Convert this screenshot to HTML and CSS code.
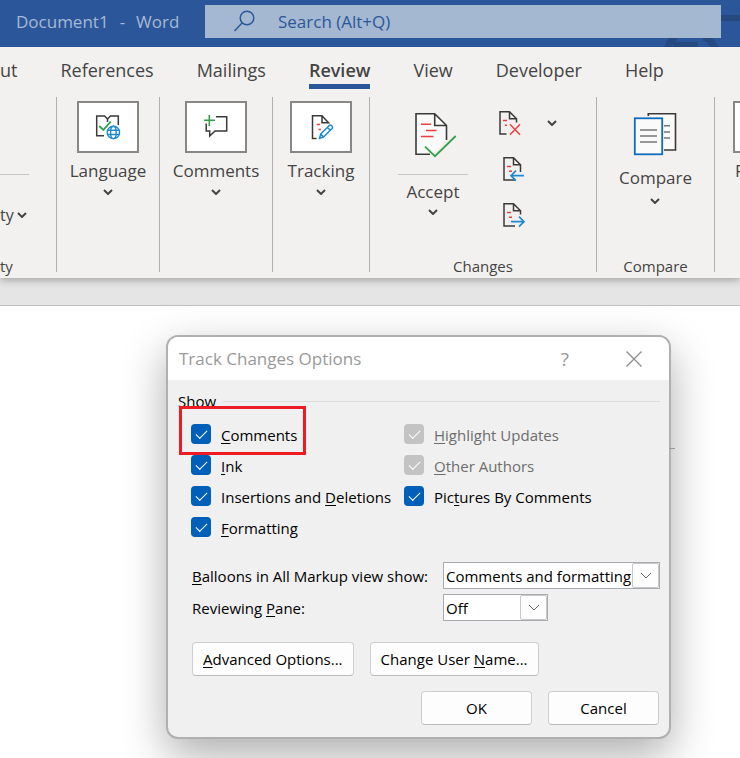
FILE: index.html
```
<!DOCTYPE html>
<html lang="en">

<head>
  <meta charset="UTF-8">
  <title>Document1 - Word</title>
  <link rel="stylesheet" href="styles.css">
</head>

<body>
  <header class="title-bar">
    <div class="doc-name"><span>Document1</span><span>-</span><span>Word</span></div>
    <div class="search">
      <svg width="22" height="24" viewBox="0 0 22 24" fill="none" stroke="#2b579a" stroke-width="1.5">
        <circle cx="13" cy="8" r="6.8" />
        <path d="M8 13L0.5 21" />
      </svg>
      <input type="text" placeholder="Search (Alt+Q)" aria-label="Search">
    </div>
    <svg class="decor" width="76" height="47" viewBox="0 0 76 47" fill="none" stroke="#264a80">
      <path d="M50 18H76" stroke-width="6" />
      <path d="M3 50Q5 40 12 37M40 37Q48 40 52 50" stroke-width="7" />
      <path d="M9 45H34" stroke-width="6" />
    </svg>
  </header>

  <nav class="tabs">
    <a href="#">ut</a>
    <a href="#">References</a>
    <a href="#">Mailings</a>
    <a href="#" class="active">Review</a>
    <a href="#">View</a>
    <a href="#">Developer</a>
    <a href="#">Help</a>
  </nav>

  <div class="ribbon">
    <section class="group accessibility">
      <button class="menu-btn">ty <svg class="chevron" width="10" height="6" viewBox="0 0 10 6"><path d="M1 1l4 4 4-4" /></svg></button>
      <span class="group-name">ty</span>
    </section>

    <section class="group language">
      <button class="big-btn">
        <span class="icon-box">
          <svg width="26" height="26" viewBox="0 0 26 26" fill="none" stroke="#3b3a39" stroke-width="1.5">
            <path d="M9 21.7H1.7V2H9.5L12.5 5L15.5 2H23.3V11" />
            <path d="M12.5 5V8" />
            <path d="M4.3 12L8.3 16L15.7 7.7" stroke="#33a04f" stroke-width="1.8" />
            <g stroke="#1e8bd1" stroke-width="1.4">
              <circle cx="18.4" cy="18.4" r="6.2" />
              <ellipse cx="18.4" cy="18.4" rx="2.8" ry="6.2" />
              <path d="M12.5 16.3H24.3M12.5 20.5H24.3" />
            </g>
          </svg>
        </span>
        Language
        <svg class="chevron" width="10" height="6" viewBox="0 0 10 6"><path d="M1 1l4 4 4-4" /></svg>
      </button>
    </section>

    <section class="group comments">
      <button class="big-btn">
        <span class="icon-box">
          <svg width="26" height="26" viewBox="0 0 26 26" fill="none" stroke="#3b3a39" stroke-width="1.5">
            <path d="M13 2.7H23.7V17H12L6.7 22V17H3.2V9.5" />
            <path d="M6.3 1V12M1 6.3H12" stroke="#33a04f" stroke-width="1.6" />
          </svg>
        </span>
        Comments
        <svg class="chevron" width="10" height="6" viewBox="0 0 10 6"><path d="M1 1l4 4 4-4" /></svg>
      </button>
    </section>

    <section class="group tracking">
      <button class="big-btn">
        <span class="icon-box">
          <svg width="26" height="26" viewBox="0 0 26 26" fill="none" stroke="#3b3a39" stroke-width="1.5">
            <path d="M8.5 24.5H4.5V1.8H14L20.5 8.8H14V1.8" />
            <path d="M8.7 10.5H12M10.5 15.5H13" stroke="#f03e3e" />
            <path d="M11.5 24.3L12.8 20L21.3 11.5Q22.5 10.4 23.8 11.7T24 14.5L15.5 23ZM19.5 13.5L22 16M12.8 20L15.5 23" stroke="#1e8bd1" />
          </svg>
        </span>
        Tracking
        <svg class="chevron" width="10" height="6" viewBox="0 0 10 6"><path d="M1 1l4 4 4-4" /></svg>
      </button>
    </section>

    <section class="group changes">
      <div class="changes-body">
        <button class="big-btn accept">
          <svg width="48" height="46" viewBox="-4 0 48 46" fill="none" stroke="#3b3a39" stroke-width="1.6">
            <path d="M17 42.3H3V1.7H21.7L33.5 13.5V28L22 40Z" fill="#fafafa" stroke="none" />
            <path d="M17 42.3H3V1.7H21.7L33.5 13.5V28M21.7 1.7V13.5H33.5" />
            <path d="M8 12.3H18M13 18.5H23.5M8 24.5H20.5" stroke="#f03e3e" />
            <path d="M12 34.7L22 44.2L42.7 24" stroke="#33a04f" stroke-width="1.8" />
          </svg>
          <span class="accept-name">Accept</span>
          <svg class="chevron" width="10" height="6" viewBox="0 0 10 6"><path d="M1 1l4 4 4-4" /></svg>
        </button>
        <div class="small-btns">
          <button class="reject" aria-label="Reject">
            <svg width="24" height="26" viewBox="0 0 24 26" fill="none" stroke="#3b3a39" stroke-width="1.5">
              <path d="M8.5 24H2V1.8H11.5L18.5 8.8V12.5M11.5 1.8V8.8H18.5" />
              <path d="M5 10.5H9M7 15.2H9" stroke="#f03e3e" />
              <path d="M12 14.3L22 24.7M22 14.3L12 24.7" stroke="#f03e3e" />
            </svg>
            <svg class="chevron" width="10" height="6" viewBox="0 0 10 6"><path d="M1 1l4 4 4-4" /></svg>
          </button>
          <button aria-label="Previous">
            <svg width="24" height="26" viewBox="0 0 24 26" fill="none" stroke="#3b3a39" stroke-width="1.5">
              <path d="M13 24H2V1.8H11.5L18.5 8.8V16M11.5 1.8V8.8H18.5" />
              <path d="M5 10.5H9M7 15.2H10" stroke="#f03e3e" />
              <path d="M22 19.7H9M14 14.7L9 19.7L14 24.7" stroke="#1e8bd1" stroke-width="1.7" />
            </svg>
          </button>
          <button aria-label="Next">
            <svg width="24" height="26" viewBox="0 0 24 26" fill="none" stroke="#3b3a39" stroke-width="1.5">
              <path d="M13 24H2V1.8H11.5L18.5 8.8V12.5M11.5 1.8V8.8H18.5" />
              <path d="M5 10.5H9M7 15.2H10" stroke="#f03e3e" />
              <path d="M9 19.7H22M17 14.7L22 19.7L17 24.7" stroke="#1e8bd1" stroke-width="1.7" />
            </svg>
          </button>
        </div>
      </div>
      <span class="group-name">Changes</span>
    </section>

    <section class="group compare">
      <button class="big-btn compare-btn">
        <svg width="44" height="44" viewBox="0 0 44 44" fill="none" stroke="#3b3a39" stroke-width="1.6">
          <path d="M15.3 4V1.8H42.5V38H31" fill="#fafafa" />
          <rect x="1.8" y="6.3" width="27.4" height="36" fill="#fafafa" stroke="#0f6cbd" stroke-width="1.8" />
          <path d="M7 18H24M7 24H24M7 30H24M31 13.7H37M31 20H37M31 26H37" stroke="#777" />
        </svg>
        Compare
        <svg class="chevron" width="10" height="6" viewBox="0 0 10 6"><path d="M1 1l4 4 4-4" /></svg>
      </button>
      <span class="group-name">Compare</span>
    </section>

    <section class="group protect">
      <button class="big-btn">
        <span class="icon-box"></span>
        Protect
      </button>
    </section>
  </div>

  <main class="workspace">
    <div class="page">
      <div class="dialog" role="dialog" aria-labelledby="dialogTitle">
        <div class="dialog-header">
          <h2 id="dialogTitle">Track Changes Options</h2>
          <button class="help" aria-label="Help">?</button>
          <button class="close" aria-label="Close">
            <svg width="16" height="16" viewBox="0 0 16 16" stroke="#8c8c8c" stroke-width="1.3"><path d="M0.5 0.5L15.5 15.5M15.5 0.5L0.5 15.5" /></svg>
          </button>
        </div>

        <form class="dialog-body">
          <div class="section-title"><span>Show</span></div>

          <div class="options">
            <label class="marked"><input type="checkbox" checked><span><u>C</u>omments</span></label>
            <label class="off"><input type="checkbox" checked disabled><span><u>H</u>ighlight Updates</span></label>
            <label><input type="checkbox" checked><span><u>I</u>nk</span></label>
            <label class="off"><input type="checkbox" checked disabled><span><u>O</u>ther Authors</span></label>
            <label><input type="checkbox" checked><span>Insertions and <u>D</u>eletions</span></label>
            <label><input type="checkbox" checked><span>Pic<u>t</u>ures By Comments</span></label>
            <label><input type="checkbox" checked><span><u>F</u>ormatting</span></label>
          </div>

          <div class="fields">
            <label for="balloons"><u>B</u>alloons in All Markup view show:</label>
            <div class="select">
              <select id="balloons">
                <option>Comments and formatting</option>
              </select>
              <span class="arrow"><svg width="12" height="7" viewBox="0 0 12 7"><path d="M1 1l5 5 5-5" /></svg></span>
            </div>
            <label for="pane">Reviewing <u>P</u>ane:</label>
            <div class="select short">
              <select id="pane">
                <option>Off</option>
              </select>
              <span class="arrow"><svg width="12" height="7" viewBox="0 0 12 7"><path d="M1 1l5 5 5-5" /></svg></span>
            </div>
          </div>

          <div class="buttons">
            <button type="button" class="btn"><u>A</u>dvanced Options...</button>
            <button type="button" class="btn">Change User <u>N</u>ame...</button>
          </div>
          <div class="buttons end">
            <button type="button" class="btn wide">OK</button>
            <button type="button" class="btn wide">Cancel</button>
          </div>
        </form>
      </div>
    </div>
  </main>
</body>

</html>
```

FILE: styles.css
```
*,
*::before,
*::after {
  box-sizing: border-box;
}

body {
  margin: 0;
  min-height: 100vh;
  display: flex;
  flex-direction: column;
  overflow: hidden;
  font-family: "Open Sans", "Noto Sans", sans-serif;
  font-size: 15px;
  color: #444;
  background: #fff;
}

button {
  border: none;
  background: none;
  padding: 0;
  font: inherit;
  color: inherit;
}

svg {
  display: block;
  flex: none;
}

/* title bar */
.title-bar {
  position: relative;
  display: flex;
  align-items: flex-start;
  height: 47px;
  padding: 5px 19px 0 16px;
  background: #2b579a;
}

.doc-name {
  display: flex;
  gap: 11px;
  width: 189px;
  flex: none;
  font-size: 17px;
  line-height: 33px;
  color: #a5b9d4;
}

.search {
  position: relative;
  z-index: 1;
  flex: 1;
  display: flex;
  align-items: center;
  gap: 22px;
  height: 33px;
  padding-left: 29px;
  background: #a5b8d1;
}

.search input {
  flex: 1;
  min-width: 0;
  border: none;
  padding: 0;
  background: none;
  font: inherit;
  font-size: 17px;
  outline: none;
}

.search input::placeholder {
  color: #2b579a;
  opacity: 1;
}

.decor {
  position: absolute;
  right: 0;
  top: 0;
}

/* tabs */
.tabs {
  position: relative;
  z-index: 1;
  display: flex;
  gap: 43px;
  height: 45px;
  background: #f3f1ef;
}

.tabs a {
  height: 42px;
  font-size: 18px;
  line-height: 46px;
  color: #444;
  text-decoration: none;
}

.tabs .active {
  font-weight: 600;
  border-bottom: 5px solid #2b579a;
}

/* ribbon */
.ribbon {
  position: relative;
  display: flex;
  padding: 5px 0 6px;
  overflow: hidden;
  background: #f3f1ef;
  box-shadow: 0 2px 8px rgba(0, 0, 0, 0.3);
}

.group {
  flex: none;
  display: flex;
  flex-direction: column;
  align-items: center;
  justify-content: space-between;
  height: 175px;
  padding-top: 4px;
  border-right: 1px solid #b1b0ae;
}

.group-name {
  margin-top: auto;
  line-height: 12px;
}

.big-btn {
  display: flex;
  flex-direction: column;
  align-items: center;
  font-size: 17px;
  line-height: 36px;
}

.icon-box {
  display: flex;
  align-items: center;
  justify-content: center;
  width: 62px;
  height: 52px;
  border: 2px solid #898785;
  background: #fff;
}

.chevron {
  fill: none;
  stroke: #444;
  stroke-width: 2;
}

.accessibility {
  width: 57px;
  align-items: flex-start;
}

.menu-btn {
  display: flex;
  align-items: center;
  gap: 3px;
  width: 29px;
  margin-top: 73px;
  border-top: 1px solid #c8c6c4;
  font-size: 16px;
  line-height: 80px;
}

.accessibility .group-name {
  position: absolute;
  bottom: 6px;
}

.language {
  width: 103px;
}

.comments {
  width: 113px;
}

.tracking {
  width: 97px;
}

.changes {
  width: 227px;
}

.changes-body {
  display: flex;
  width: 100%;
  padding: 9px 0 0 28px;
}

.accept {
  width: 70px;
  padding-top: 2px;
}

.accept-name {
  width: 100%;
  margin-top: 16px;
  border-top: 1px solid #c8c6c4;
  line-height: 34px;
}

.small-btns {
  display: flex;
  flex-direction: column;
  gap: 20px;
  padding-left: 34px;
}

.small-btns .reject {
  display: flex;
  align-items: center;
  gap: 25px;
  margin-left: -4px;
}

.compare {
  width: 118px;
}

.compare-btn {
  padding-top: 11px;
  line-height: 44px;
}

.compare-btn .chevron {
  margin-top: -2px;
}

.protect {
  width: 97px;
  border: none;
}

/* document */
.workspace {
  flex: 1;
  display: flex;
  flex-direction: column;
  padding-top: 27px;
  background: #e5e5e5;
}

.page {
  position: relative;
  flex: 1;
  padding: 29px 69px 19px 166px;
  border-top: 1px solid #c0c0c0;
  background: #fff;
}

.page::after {
  content: "";
  position: absolute;
  top: 142px;
  right: 65px;
  width: 6px;
  border-top: 1px solid #999;
}

/* dialog */
.dialog {
  border: 2px solid #b0b0b0;
  border-radius: 12px;
  overflow: hidden;
  background: #f0f0f0;
  color: #000;
  box-shadow: 0 16px 44px rgba(0, 0, 0, 0.32);
}

.dialog-header {
  display: flex;
  align-items: center;
  height: 43px;
  padding: 0 27px 0 11px;
  background: #fff;
  color: #999;
}

.dialog-header h2 {
  flex: 1;
  margin: 0;
  font-size: 17px;
  font-weight: normal;
}

.help {
  margin-right: 57px;
  font-size: 19px;
}

.dialog-body {
  padding: 10px 9px 12px 10px;
}

.section-title {
  display: flex;
  align-items: center;
  gap: 7px;
  line-height: 22px;
}

.section-title::after {
  content: "";
  flex: 1;
  border-top: 1px solid #dcdcdc;
}

.options {
  display: grid;
  grid-template-columns: 213px 1fr;
  grid-auto-rows: 31px;
  margin-top: 6px;
  padding-left: 13px;
}

.options label {
  position: relative;
  display: flex;
  align-items: center;
  gap: 10px;
}

.options label span {
  padding-top: 2px;
}

.options .off {
  color: #6d6d6d;
}

.options input {
  appearance: none;
  position: relative;
  flex: none;
  width: 20px;
  height: 20px;
  margin: 0;
  border-radius: 4px;
  background: #005fb8;
}

.options input:disabled {
  background: #c3c3c3;
}

.options input:checked::after {
  content: "";
  position: absolute;
  left: 5px;
  top: 6px;
  width: 11px;
  height: 6px;
  border-left: 1px solid #fff;
  border-bottom: 1px solid #fff;
  transform: rotate(-45deg);
}

.marked::after {
  content: "";
  position: absolute;
  left: -12px;
  top: -12px;
  width: 127px;
  height: 49px;
  border: 3px solid #ed1c24;
}

u {
  text-underline-offset: 2px;
}

.fields {
  display: grid;
  grid-template-columns: 237px 1fr;
  column-gap: 14px;
  row-gap: 5px;
  align-items: center;
  margin-top: 20px;
  padding-left: 14px;
}

.fields label {
  white-space: nowrap;
}

.select {
  position: relative;
}

.short {
  width: 105px;
}

.select select {
  appearance: none;
  display: block;
  width: 100%;
  height: 27px;
  padding: 0 28px 0 2px;
  border: 1px solid #a9a9b0;
  border-radius: 0;
  background: #fff;
  font: inherit;
  color: #000;
}

.arrow {
  position: absolute;
  top: 1px;
  right: 1px;
  bottom: 1px;
  width: 27px;
  display: flex;
  align-items: center;
  justify-content: center;
  border: 1px solid #c8c8c8;
  border-radius: 2px;
  background: #fdfdfd;
  pointer-events: none;
}

.arrow svg {
  fill: none;
  stroke: #666;
}

.buttons {
  display: flex;
  gap: 16px;
  margin-top: 21px;
  padding-left: 14px;
}

.buttons.end {
  justify-content: flex-end;
  margin-top: 15px;
  padding-right: 1px;
}

.btn {
  height: 34px;
  padding: 0 10px;
  border: 1px solid #cfcfcf;
  border-bottom-color: #bbb;
  border-radius: 4px;
  background: #fdfdfd;
}

.wide {
  width: 111px;
}
```
